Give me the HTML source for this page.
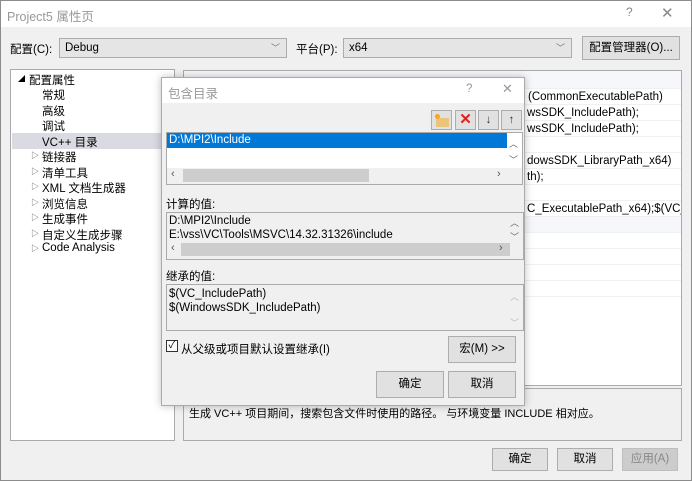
<!DOCTYPE html><html><head><meta charset="utf-8"><style>
*{box-sizing:border-box;margin:0;padding:0}
body{width:692px;height:481px;overflow:hidden;background:#f0f0f0;font-family:"Liberation Sans","Noto Sans CJK SC",sans-serif;font-size:11.5px;color:#000;position:relative}
.a{position:absolute}
.win{left:0;top:0;width:692px;height:481px;border:1px solid #8c8c8c}
.btn{position:absolute;background:#e1e1e1;border:1px solid #adadad;text-align:center;font-size:11.5px}
.combo{position:absolute;background:#e5e5e5;border:1px solid #acacac;padding-left:5px;line-height:18px}
.t{position:absolute;white-space:nowrap}
.row{position:absolute;left:0;right:0;height:16px;border-bottom:1px solid #f0f0f0}
.ch{position:absolute;color:#666;font-size:9px}
</style></head><body>
<div class="a win"></div>
<div class="a" style="left:1px;top:1px;width:690px;height:26px;background:#fff"></div>
<div class="t" style="left:7px;top:6px;color:#999;font-size:12.5px">Project5 属性页</div>
<div class="t" style="left:626px;top:5px;color:#888;font-size:12px">?</div>
<div class="t" style="left:661px;top:4px;color:#888;font-size:15px">✕</div>

<div class="t" style="left:10px;top:41px">配置(C):</div>
<div class="combo" style="left:59px;top:38px;width:228px;height:20px">Debug<span class="a" style="right:6px;top:0;color:#777;font-size:9px">﹀</span></div>
<div class="t" style="left:296px;top:41px">平台(P):</div>
<div class="combo" style="left:343px;top:38px;width:229px;height:20px">x64<span class="a" style="right:6px;top:0;color:#777;font-size:9px">﹀</span></div>
<div class="btn" style="left:582px;top:36px;width:98px;height:24px;line-height:22px">配置管理器(O)...</div>

<div class="a" style="left:10px;top:69px;width:165px;height:372px;background:#fff;border:1px solid #aaa"></div>
<div class="a" style="left:12px;top:133px;width:162px;height:16px;background:#dadae3"></div>
<div class="t" style="left:18px;top:74px;font-size:7px">◢</div>
<div class="t" style="left:29px;top:72px">配置属性</div>
<div class="t" style="left:42px;top:87px">常规</div>
<div class="t" style="left:42px;top:103px">高级</div>
<div class="t" style="left:42px;top:118px">调试</div>
<div class="t" style="left:42px;top:134px">VC++ 目录</div>
<div class="t" style="left:31px;top:150px;font-size:8px;color:#555">▷</div><div class="t" style="left:42px;top:149px">链接器</div>
<div class="t" style="left:31px;top:166px;font-size:8px;color:#555">▷</div><div class="t" style="left:42px;top:165px">清单工具</div>
<div class="t" style="left:31px;top:181px;font-size:8px;color:#555">▷</div><div class="t" style="left:42px;top:180px">XML 文档生成器</div>
<div class="t" style="left:31px;top:197px;font-size:8px;color:#555">▷</div><div class="t" style="left:42px;top:196px">浏览信息</div>
<div class="t" style="left:31px;top:212px;font-size:8px;color:#555">▷</div><div class="t" style="left:42px;top:211px">生成事件</div>
<div class="t" style="left:31px;top:228px;font-size:8px;color:#555">▷</div><div class="t" style="left:42px;top:227px">自定义生成步骤</div>
<div class="t" style="left:31px;top:243px;font-size:8px;color:#555">▷</div><div class="t" style="left:42px;top:242px">Code Analysis</div>

<div class="a" style="left:183px;top:70px;width:499px;height:316px;background:#fff;border:1px solid #aaa;overflow:hidden">
<div class="row" style="top:0;height:18px;background:#f5f7fb"></div>
<div class="row" style="top:18px"></div><div class="row" style="top:34px"></div><div class="row" style="top:50px"></div><div class="row" style="top:66px"></div><div class="row" style="top:82px"></div><div class="row" style="top:98px"></div><div class="row" style="top:114px"></div><div class="row" style="top:130px"></div>
<div class="row" style="top:146px;height:16px;background:#f5f7fb"></div>
<div class="row" style="top:162px"></div><div class="row" style="top:178px"></div><div class="row" style="top:194px"></div><div class="row" style="top:210px"></div>
<div class="t" style="left:344px;top:20px">(CommonExecutablePath)</div>
<div class="t" style="left:343px;top:36px">wsSDK_IncludePath);</div>
<div class="t" style="left:343px;top:52px">wsSDK_IncludePath);</div>
<div class="t" style="left:343px;top:84px">dowsSDK_LibraryPath_x64)</div>
<div class="t" style="left:343px;top:100px">th);</div>
<div class="t" style="left:343px;top:132px">C_ExecutablePath_x64);$(VC_L</div>
</div>
<div class="a" style="left:183px;top:388px;width:499px;height:53px;border:1px solid #aaa"></div>
<div class="t" style="left:189px;top:405px;font-size:11px">生成 VC++ 项目期间，搜索包含文件时使用的路径。 与环境变量 INCLUDE 相对应。</div>

<div class="btn" style="left:492px;top:448px;width:56px;height:23px;line-height:21px">确定</div>
<div class="btn" style="left:557px;top:448px;width:56px;height:23px;line-height:21px">取消</div>
<div class="btn" style="left:622px;top:448px;width:56px;height:23px;line-height:21px;background:#ccc;border-color:#bfbfbf;color:#888">应用(A)</div>

<!-- dialog -->
<div class="a" style="left:161px;top:77px;width:364px;height:329px;background:#f0f0f0;border:1px solid #aaa;box-shadow:0 0 8px rgba(0,0,0,.25)"></div>
<div class="a" style="left:162px;top:78px;width:362px;height:25px;background:#fff"></div>
<div class="t" style="left:168px;top:83px;color:#999;font-size:12.5px">包含目录</div>
<div class="t" style="left:466px;top:83px;color:#999">?</div>
<div class="t" style="left:502px;top:81px;color:#999;font-size:13px">✕</div>

<div class="btn" style="left:431px;top:110px;width:21px;height:20px"><div class="a" style="left:4px;top:7px;width:13px;height:9px;background:#e8c57a"></div><div class="a" style="left:3px;top:3px;width:5px;height:5px;background:#f5a623;border-radius:50%"></div></div>
<div class="btn" style="left:455px;top:110px;width:21px;height:20px;color:#d22;font-size:15px;line-height:17px;font-weight:bold">✕</div>
<div class="btn" style="left:478px;top:110px;width:21px;height:20px;line-height:18px;color:#333;font-weight:bold">↓</div>
<div class="btn" style="left:501px;top:110px;width:21px;height:20px;line-height:18px;color:#333;font-weight:bold">↑</div>

<div class="a" style="left:166px;top:132px;width:357px;height:53px;background:#fff;border:1px solid #aaa"></div>
<div class="a" style="left:167px;top:133px;width:340px;height:15px;background:#0078d7"></div>
<div class="t" style="left:169px;top:134px;color:#fff">D:\MPI2\Include</div>
<div class="a" style="left:167px;top:168px;width:355px;height:16px;background:#f0f0f0"></div>
<div class="a" style="left:183px;top:169px;width:186px;height:13px;background:#cdcdcd"></div>
<div class="t" style="left:171px;top:168px;color:#555;font-size:11px">‹</div>
<div class="t" style="left:497px;top:168px;color:#555;font-size:11px">›</div>
<div class="ch" style="left:509px;top:137px">︿</div>
<div class="ch" style="left:509px;top:153px">﹀</div>

<div class="t" style="left:166px;top:196px">计算的值:</div>
<div class="a" style="left:166px;top:212px;width:358px;height:48px;background:#f0f0f0;border:1px solid #aaa"></div>
<div class="t" style="left:169px;top:215px">D:\MPI2\Include</div>
<div class="t" style="left:169px;top:229px">E:\vss\VC\Tools\MSVC\14.32.31326\include</div>
<div class="a" style="left:181px;top:243px;width:329px;height:13px;background:#cdcdcd"></div>
<div class="t" style="left:171px;top:242px;color:#555;font-size:11px">‹</div>
<div class="t" style="left:499px;top:242px;color:#555;font-size:11px">›</div>
<div class="ch" style="left:510px;top:216px">︿</div>
<div class="ch" style="left:510px;top:230px">﹀</div>

<div class="t" style="left:166px;top:268px">继承的值:</div>
<div class="a" style="left:166px;top:284px;width:358px;height:47px;background:#f0f0f0;border:1px solid #aaa"></div>
<div class="t" style="left:169px;top:288px">$(VC_IncludePath)</div>
<div class="t" style="left:169px;top:302px">$(WindowsSDK_IncludePath)</div>
<div class="ch" style="left:510px;top:290px;color:#bbb">︿</div>
<div class="ch" style="left:510px;top:316px;color:#bbb">﹀</div>

<div class="a" style="left:166px;top:340px;width:12px;height:12px;border:1px solid #333;background:#fff;font-size:10px;line-height:10px;text-align:center">✓</div>
<div class="t" style="left:181px;top:341px">从父级或项目默认设置继承(I)</div>
<div class="btn" style="left:448px;top:336px;width:68px;height:27px;line-height:25px">宏(M) &gt;&gt;</div>
<div class="btn" style="left:376px;top:371px;width:68px;height:27px;line-height:25px">确定</div>
<div class="btn" style="left:448px;top:371px;width:68px;height:27px;line-height:25px">取消</div>
</body></html>
